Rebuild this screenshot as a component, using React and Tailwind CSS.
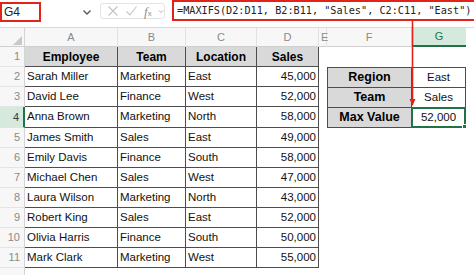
import React from 'react';

const cols = ['A', 'B', 'C', 'D', 'E', 'F', 'G', ''];
const grid = 'grid grid-cols-[25px_93px_68px_71px_62px_8px_85px_54px_1fr]';

const rows = [
    ['Sarah Miller', 'Marketing', 'East', '45,000'],
    ['David Lee', 'Finance', 'West', '52,000'],
    ['Anna Brown', 'Marketing', 'North', '58,000'],
    ['James Smith', 'Sales', 'East', '49,000'],
    ['Emily Davis', 'Finance', 'South', '58,000'],
    ['Michael Chen', 'Sales', 'West', '47,000'],
    ['Laura Wilson', 'Marketing', 'North', '43,000'],
    ['Robert King', 'Sales', 'East', '52,000'],
    ['Olivia Harris', 'Finance', 'South', '50,000'],
    ['Mark Clark', 'Marketing', 'West', '55,000'],
];

const lookup = [
    ['Region', 'East'],
    ['Team', 'Sales'],
    ['Max Value', '52,000'],
];

const dark = 'border-[#4d4d4d]';

function RowHead({ n, active }) {
    return (
        <div
            className={`flex items-center justify-end pr-[4px] text-[11px] ${
                active
                    ? 'bg-[#d5eadc] border-r-2 border-[#217346] text-[#3a3a3a]'
                    : 'bg-[#f7f7f7] border-r border-[#d4d4d4] text-[#8a8a8a]'
            } border-b border-b-[#e4e4e4]`}
        >
            {n}
        </div>
    );
}

function LookupCells({ i }) {
    if (i < 0 || i > 2) return (<><div /><div /></>);
    const [label, value] = lookup[i];
    const last = i === 2 ? 'border-b' : '';
    return (
        <>
            <div className={`flex items-center justify-center bg-[#d9d9d9] border-l border-r border-t ${last} ${dark} font-bold text-[12.5px] text-black`}>
                {label}
            </div>
            <div className={`relative flex items-center justify-center border-r border-t ${last} ${dark} text-[11.5px] text-[#111]`}>
                {value}
                {i === 2 && (
                    <div className="absolute -inset-[1px] border-2 border-[#217346]">
                        <div className="absolute -right-[3px] -bottom-[3px] w-[5px] h-[5px] bg-[#217346] border border-white" />
                    </div>
                )}
            </div>
        </>
    );
}

export default function App() {
    return (
        <div className="relative w-[474px] h-[275px] overflow-hidden bg-white" style={{ fontFamily: '"Liberation Sans", Arial, sans-serif' }}>
            {/* formula bar */}
            <div className="flex items-start h-[28px] border-b border-[#d9d9d9]">
                <div className="relative w-[96px] h-[22px] mt-[1px] flex items-center">
                    <div className="w-[41px] h-[20px] border-2 border-[#e2231a] flex items-center pl-[2px] text-[12px] text-[#222]">G4</div>
                    <svg className="ml-[41px]" width="10" height="8" viewBox="0 0 10 8" fill="none" stroke="#555" strokeWidth="1.3">
                        <path d="M1.5 2.5 5 6 8.5 2.5" />
                    </svg>
                </div>
                <div className="ml-[4px] mt-[3px] w-[65px] h-[16px] border border-[#e3e3e3] rounded-[3px] flex items-center gap-[6px] pl-[6px] text-[#b5b5b5]">
                    <svg width="12" height="12" viewBox="0 0 12 12" stroke="#c4c4c4" strokeWidth="1.1" fill="none">
                        <path d="M1.5 1.5 10.5 10.5M10.5 1.5 1.5 10.5" />
                    </svg>
                    <svg width="13" height="12" viewBox="0 0 13 12" stroke="#c4c4c4" strokeWidth="1.1" fill="none">
                        <path d="M1.5 6.5 5 10 11.5 1.5" />
                    </svg>
                    <span className="text-[#8f8f8f] text-[13px] italic leading-none" style={{ fontFamily: '"Liberation Serif", serif' }}>
                        f<span className="not-italic text-[8px]" style={{ fontFamily: '"Liberation Sans", sans-serif' }}>x</span>
                    </span>
                    <svg width="6" height="5" viewBox="0 0 6 5" fill="none" stroke="#d0a0a0" strokeWidth="1">
                        <path d="M1 1.5 3 3.5 5 1.5" />
                    </svg>
                </div>
                <div className="ml-[7px] flex-1 h-[21px] border-2 border-r-0 border-[#e2231a] flex items-center pl-[3px] whitespace-nowrap overflow-hidden text-[10.2px] text-[#222]" style={{ fontFamily: '"DejaVu Sans Mono", "Liberation Mono", monospace' }}>
                    =MAXIFS(D2:D11, B2:B11, "Sales", C2:C11, "East")
                </div>
            </div>

            {/* column headers */}
            <div className={`${grid} h-[19px] bg-[#f7f7f7] border-b border-[#d0d0d0]`}>
                <div className="relative border-r border-[#d4d4d4]">
                    <div className="absolute right-[2px] bottom-[2px] w-0 h-0 border-l-[9px] border-l-transparent border-b-[9px] border-b-[#c8c8c8]" />
                </div>
                {cols.map((c, i) => (
                    <div
                        key={i}
                        className={`flex items-center text-[11px] ${c === 'E' ? 'justify-start pl-[2px]' : 'justify-center'} ${
                            c === 'G'
                                ? 'bg-[#d5eadc] text-[#217346] border-b-2 border-[#217346]'
                                : c === ''
                                ? 'bg-white'
                                : 'text-[#8a8a8a] border-r border-[#e2e2e2]'
                        }`}
                    >
                        {c}
                    </div>
                ))}
                <div className="bg-white" />
            </div>

            {/* header row */}
            <div className={`${grid} h-[20px]`}>
                <RowHead n={1} />
                {['Employee', 'Team', 'Location', 'Sales'].map((h) => (
                    <div key={h} className={`flex items-center justify-center bg-[#d9d9d9] border-r border-b ${dark} font-bold text-[12px] text-black`}>
                        {h}
                    </div>
                ))}
                <div /><div /><div /><div />
            </div>

            {/* data rows */}
            {rows.map((r, i) => (
                <div key={i} className={`${grid} ${i === 2 ? 'h-[21px]' : 'h-[20px]'}`}>
                    <RowHead n={i + 2} active={i === 2} />
                    <div className={`flex items-center pl-[2px] border-r border-b ${dark} text-[11.5px] text-[#111] whitespace-nowrap`}>{r[0]}</div>
                    <div className={`flex items-center pl-[2px] border-r border-b ${dark} text-[11.5px] text-[#111]`}>{r[1]}</div>
                    <div className={`flex items-center pl-[2px] border-r border-b ${dark} text-[11.5px] text-[#111]`}>{r[2]}</div>
                    <div className={`flex items-center justify-end pr-[2px] border-r border-b ${dark} text-[11.5px] text-[#111]`}>{r[3]}</div>
                    <div />
                    <LookupCells i={i} />
                    <div />
                </div>
            ))}

            <div className={`${grid} h-[8px]`}>
                <RowHead n="" />
            </div>

            {/* arrow from formula to G4 */}
            <svg className="absolute left-0 top-0 pointer-events-none" width="474" height="275">
                <line x1="412.5" y1="21" x2="412.5" y2="100" stroke="#e2231a" strokeWidth="1.6" />
                <polygon points="409.5,99 415.5,99 412.5,106" fill="#e2231a" />
            </svg>
        </div>
    );
}
